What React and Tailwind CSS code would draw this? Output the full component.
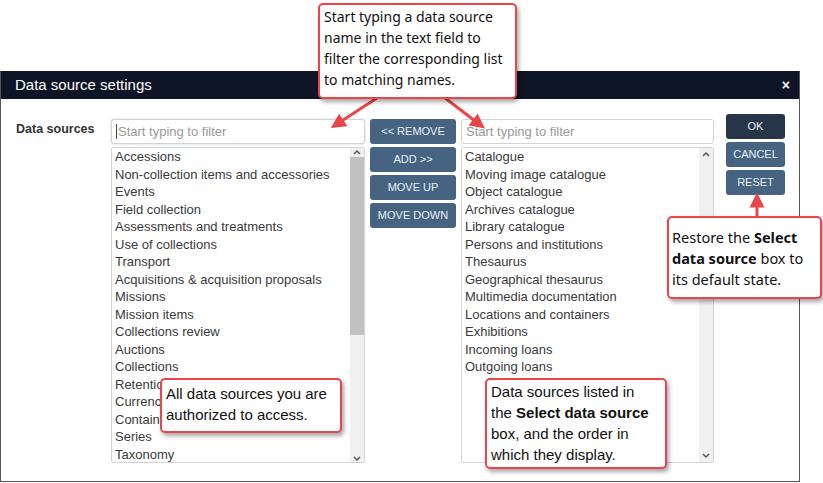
import React from 'react'

const left = [
  'Accessions',
  'Non-collection items and accessories',
  'Events',
  'Field collection',
  'Assessments and treatments',
  'Use of collections',
  'Transport',
  'Acquisitions & acquisition proposals',
  'Missions',
  'Mission items',
  'Collections review',
  'Auctions',
  'Collections',
  'Retention',
  'Currency',
  'Containers',
  'Series',
  'Taxonomy',
]

const right = [
  'Catalogue',
  'Moving image catalogue',
  'Object catalogue',
  'Archives catalogue',
  'Library catalogue',
  'Persons and institutions',
  'Thesaurus',
  'Geographical thesaurus',
  'Multimedia documentation',
  'Locations and containers',
  'Exhibitions',
  'Incoming loans',
  'Outgoing loans',
]

function Chevron({ up }) {
  return (
    <svg width="8" height="6" viewBox="0 0 8 6" className="mx-auto">
      <path d={up ? 'M1 5 L4 2 L7 5' : 'M1 1 L4 4 L7 1'} fill="none" stroke="#555" strokeWidth="1.5" />
    </svg>
  )
}

function FilterInput({ focused }) {
  return (
    <div
      className={
        'flex h-[25px] items-center rounded-[3px] border border-[#d4d4d4] bg-white px-[4px] text-[13px] text-[#9a9a9a] ' +
        (focused ? 'shadow-[0_0_2px_rgba(102,150,200,0.5)]' : '')
      }
    >
      {focused && <span className="mr-[1px] h-[15px] w-px bg-[#444]" />}
      Start typing to filter
    </div>
  )
}

function ListBox({ items, thumb }) {
  return (
    <div className="flex h-[316px] overflow-hidden rounded-[2px] border border-[#d4d4d4] bg-white">
      <div className="flex-1 pl-[3px] text-[13px] leading-[17.5px] text-[#3a3a3a]">
        {items.map((it) => (
          <div key={it} className="whitespace-nowrap">{it}</div>
        ))}
      </div>
      <div className="flex w-[14px] flex-col bg-[#f0f0f0]">
        <div className="flex h-[12px] items-center"><Chevron up /></div>
        <div className="flex-1 pt-[2px] pb-[120px]">
          {thumb && <div className="h-[178px] w-full bg-[#c1c1c1]" />}
        </div>
        <div className="flex h-[12px] items-center"><Chevron /></div>
      </div>
    </div>
  )
}

function Btn({ children, dark }) {
  return (
    <div
      className={
        'flex h-[25px] items-center justify-center rounded-[3px] text-[11px] text-[#e8eef4] ' +
        (dark ? 'bg-[#263547]' : 'bg-[#466481]')
      }
    >
      {children}
    </div>
  )
}

function Callout({ className, children }) {
  return (
    <div
      className={
        'absolute rounded-[5px] border-2 border-[#e8464a] bg-white text-[#111] shadow-[2px_3px_4px_rgba(0,0,0,0.35)] ' +
        className
      }
    >
      {children}
    </div>
  )
}

export default function App() {
  return (
    <div className="relative h-[483px] w-[823px] overflow-hidden bg-white font-['Liberation_Sans',Arial,sans-serif]">
      <div className="pt-[71px]">
        <div className="h-[411px] w-[800px] border-x border-b border-[#555]">
          <div className="flex h-[28px] items-center justify-between bg-[#0e1526] pl-[14px] pr-[9px] text-white">
            <span className="text-[15px]">Data source settings</span>
            <span className="text-[14px] font-bold">×</span>
          </div>
          <div className="flex pl-[15px] pt-[20px]">
            <div className="w-[95px] pt-[1px] text-[12.5px] font-bold text-[#333]">Data sources</div>
            <div className="flex w-[254px] flex-col gap-[3px]">
              <FilterInput focused />
              <ListBox items={left} thumb />
            </div>
            <div className="ml-[5px] flex w-[86px] flex-col gap-[3px]">
              <Btn>&lt;&lt; REMOVE</Btn>
              <Btn>ADD &gt;&gt;</Btn>
              <Btn>MOVE UP</Btn>
              <Btn>MOVE DOWN</Btn>
            </div>
            <div className="ml-[5px] flex w-[253px] flex-col gap-[3px]">
              <FilterInput />
              <ListBox items={right} />
            </div>
            <div className="-mt-[5px] ml-[12px] flex w-[59px] flex-col gap-[3px]">
              <Btn dark>OK</Btn>
              <Btn>CANCEL</Btn>
              <Btn>RESET</Btn>
            </div>
          </div>
        </div>
      </div>

      <svg className="pointer-events-none absolute left-0 top-0" width="823" height="483">
        <defs>
          <marker id="head" markerWidth="5" markerHeight="5" refX="2.5" refY="2.5" orient="auto" markerUnits="strokeWidth">
            <path d="M0 0 L5 2.5 L0 5 Z" fill="#e8464a" />
          </marker>
        </defs>
        <g stroke="#e8464a" strokeWidth="3" fill="none">
          <line x1="377" y1="98" x2="337" y2="124" markerEnd="url(#head)" />
          <line x1="445" y1="98" x2="479" y2="124" markerEnd="url(#head)" />
          <line x1="757" y1="217" x2="757" y2="200" markerEnd="url(#head)" />
        </g>
      </svg>

      <Callout className="left-[318px] top-[3px] w-[199px] h-[96px] px-[4px] pt-[1px] font-['Noto_Sans',sans-serif] text-[14px] leading-[21px]">
        Start typing a data source name in the text field to filter the corresponding list to matching names.
      </Callout>
      <Callout className="left-[667px] top-[216px] w-[155px] h-[83px] px-[3px] pt-[9px] font-['Noto_Sans',sans-serif] text-[14.5px] leading-[21px]">
        Restore the <b>Select</b>
        <br />
        <b>data source</b> box to
        <br />
        its default state.
      </Callout>
      <Callout className="left-[160px] top-[378px] w-[182px] h-[55px] px-[4px] pt-[3px] text-[15px] leading-[21px]">
        All data sources you are
        <br />
        authorized to access.
      </Callout>
      <Callout className="left-[485px] top-[378px] w-[182px] h-[91px] px-[4px] pt-[1px] text-[15px] leading-[21px]">
        Data sources listed in
        <br />
        the <b>Select data source</b>
        <br />
        box, and the order in
        <br />
        which they display.
      </Callout>
    </div>
  )
}
